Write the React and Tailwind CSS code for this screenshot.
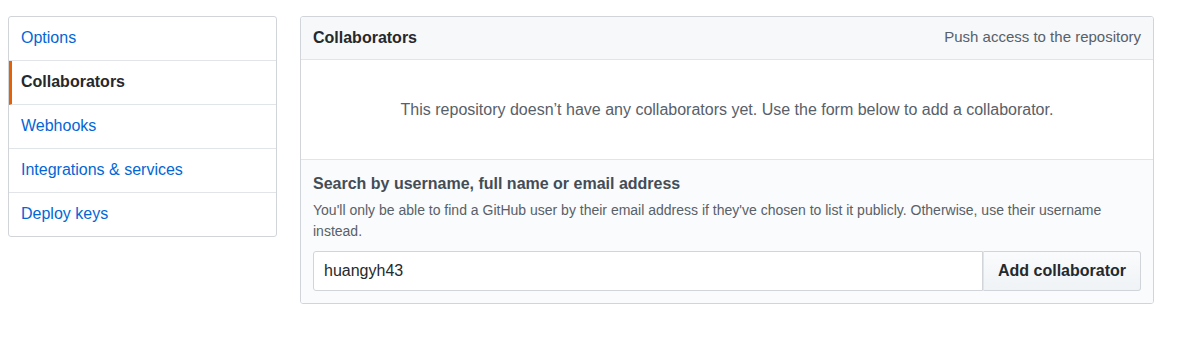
import React from 'react';

const menu = [
  { label: 'Options' },
  { label: 'Collaborators', active: true },
  { label: 'Webhooks' },
  { label: 'Integrations & services' },
  { label: 'Deploy keys' },
];

function SideMenu() {
  return (
    <nav className="w-[269px] shrink-0 bg-white border border-[#d1d5da] rounded-[3px] overflow-hidden">
      {menu.map((item, i) => {
        const last = i === menu.length - 1;
        const cls = [
          'flex items-center pb-[2px] text-[16px] no-underline',
          last ? 'h-[43px]' : 'h-[44px] border-b border-[#e1e4e8]',
          item.active
            ? 'border-l-[3px] border-l-[#e36209] pl-[9px] font-bold text-[#24292e]'
            : 'pl-[12px] text-[#0366d6]',
        ].join(' ');
        return (
          <a key={item.label} href="#" className={cls}>
            {item.label}
          </a>
        );
      })}
    </nav>
  );
}

function CollaboratorsBox() {
  return (
    <div className="w-[854px] border border-[#d1d5da] rounded-[3px] overflow-hidden">
      <div className="h-[43px] flex items-center justify-between px-[12px] pb-[1px] bg-[#f6f8fa] border-b border-[#e1e4e8]">
        <h3 className="text-[16px] font-bold text-[#24292e]">Collaborators</h3>
        <span className="text-[15px] text-[#586069]">Push access to the repository</span>
      </div>
      <div className="h-[100px] flex items-center justify-center bg-white border-b border-[#e1e4e8] text-[16px] text-[#586069]">
        This repository doesn’t have any collaborators yet. Use the form below to add a collaborator.
      </div>
      <div className="bg-[#fafbfc] px-[12px] pt-[12px] pb-[12px]">
        <label className="block text-[16px] leading-[24px] font-bold text-[#444d56]">
          Search by username, full name or email address
        </label>
        <p className="mt-[4px] text-[14px] leading-[21px] text-[#586069]">
          You'll only be able to find a GitHub user by their email address if they've chosen to list it publicly. Otherwise, use their username instead.
        </p>
        <div className="mt-[9px] flex h-[40px]">
          <input
            defaultValue="huangyh43"
            className="flex-1 min-w-0 px-[10px] bg-white border border-[#d1d5da] rounded-l-[3px] text-[16px] text-[#24292e] outline-none"
          />
          <button
            type="button"
            className="w-[158px] border border-[#d1d5da] border-l-[#e1e4e8] rounded-r-[3px] bg-gradient-to-b from-[#fafbfc] to-[#eff3f6] text-[16px] font-bold text-[#24292e]"
          >
            Add collaborator
          </button>
        </div>
      </div>
    </div>
  );
}

export default function App() {
  return (
    <div className="w-[1188px] h-[338px] bg-white font-['Liberation_Sans',Arial,sans-serif]">
      <div className="flex items-start gap-[23px] pl-[8px] pt-[16px]">
        <SideMenu />
        <CollaboratorsBox />
      </div>
    </div>
  );
}
